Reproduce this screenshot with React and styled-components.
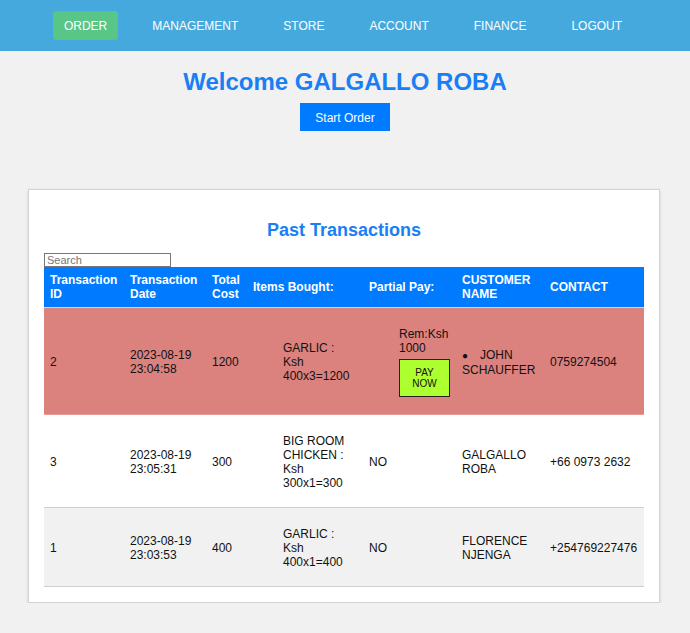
import React from 'react';
import styled, { createGlobalStyle } from 'styled-components';

const GlobalStyle = createGlobalStyle`
  body {
    margin: 0;
    background-color: #f1f1f1;
    font-family: "Liberation Sans", Arial, sans-serif;
    font-size: 12px;
    color: #111;
  }
`;

const NavBar = styled.nav`
  height: 51px;
  padding-right: 4px;
  background-color: #45a9dd;
  display: flex;
  align-items: center;
  justify-content: center;
  gap: 23px;
`;

const NavItem = styled.a`
  display: block;
  padding: 8px 11px 6px;
  line-height: 15px;
  font-size: 12px;
  color: #ffffff;
  text-decoration: none;
  border-radius: 3px;
  background-color: ${(p) => (p.$active ? '#58c687' : 'transparent')};
  cursor: pointer;
`;

const Hero = styled.section`
  display: flex;
  flex-direction: column;
  align-items: center;
  padding-top: 17px;
`;

const Title = styled.h1`
  margin: 0;
  font-size: 24px;
  line-height: 28px;
  font-weight: bold;
  color: #1a7ef5;
`;

const StartButton = styled.button`
  margin-top: 7px;
  padding: 8px 15px 6px;
  font-family: inherit;
  font-size: 12px;
  line-height: 14px;
  height: 28px;
  color: #ffffff;
  background-color: #007bff;
  border: none;
  cursor: pointer;
`;

const Card = styled.div`
  width: 600px;
  margin: 58px 0 0 28px;
  padding: 15px;
  background-color: #ffffff;
  border: 1px solid #d2d2d2;
  box-shadow: 0 1px 3px rgba(0, 0, 0, 0.12);
`;

const CardTitle = styled.h2`
  margin: 15px 0 12px;
  text-align: center;
  font-size: 18px;
  line-height: 21px;
  color: #1a7ef5;
`;

const SearchInput = styled.input`
  display: block;
  box-sizing: border-box;
  width: 127px;
  height: 14px;
  margin: 0;
  padding: 0 2px;
  font-family: inherit;
  font-size: 11px;
  border: 1px solid #767676;
  outline: none;

  &::placeholder {
    color: #757575;
  }
`;

const Table = styled.table`
  width: 600px;
  table-layout: fixed;
  border-collapse: collapse;
`;

const HeadCell = styled.th`
  padding: 6px;
  text-align: left;
  vertical-align: middle;
  font-size: 12px;
  line-height: 14px;
  font-weight: bold;
  color: #ffffff;
  background-color: #007bff;
`;

const Row = styled.tr`
  background-color: ${(p) => p.$bg};
  border-bottom: 1px solid ${(p) => p.$line};
`;

const Cell = styled.td`
  padding: 19px 6px 17px;
  vertical-align: middle;
  font-size: 12px;
  line-height: 14px;
  color: #111;
`;

const ItemList = styled.ul`
  margin: 0;
  padding-left: 30px;
  list-style: none;
`;

const PayButton = styled.button`
  display: block;
  width: 51px;
  height: 38px;
  margin-top: 4px;
  padding: 0 8px;
  font-family: inherit;
  font-size: 10px;
  line-height: 11px;
  color: #111;
  background-color: #adff2f;
  border: 1px solid #222;
  cursor: pointer;
`;

const NameList = styled.ul`
  margin: 0;
  padding: 0;
  list-style: none;
`;

const Bullet = styled.span`
  display: inline-block;
  width: 18px;
  font-size: 10px;
`;

const columns = [
  { label: 'Transaction ID', width: 80 },
  { label: 'Transaction Date', width: 82 },
  { label: 'Total Cost', width: 41 },
  { label: 'Items Bought:', width: 116 },
  { label: 'Partial Pay:', width: 93 },
  { label: 'CUSTOMER NAME', width: 88 },
  { label: 'CONTACT', width: 100 },
];

const transactions = [
  {
    id: '2',
    date: ['2023-08-19', '23:04:58'],
    total: '1200',
    items: 'GARLIC : Ksh 400x3=1200',
    remaining: 'Rem:Ksh 1000',
    customer: 'JOHN SCHAUFFER',
    contact: '0759274504',
    bg: '#db827f',
    line: '#e39c99',
  },
  {
    id: '3',
    date: ['2023-08-19', '23:05:31'],
    total: '300',
    items: 'BIG ROOM CHICKEN : Ksh 300x1=300',
    remaining: null,
    customer: 'GALGALLO ROBA',
    contact: '+66 0973 2632',
    bg: '#ffffff',
    line: '#d0d0d0',
  },
  {
    id: '1',
    date: ['2023-08-19', '23:03:53'],
    total: '400',
    items: 'GARLIC : Ksh 400x1=400',
    remaining: null,
    customer: 'FLORENCE NJENGA',
    contact: '+254769227476',
    bg: '#f1f1f1',
    line: '#d0d0d0',
  },
];

const navLinks = ['ORDER', 'MANAGEMENT', 'STORE', 'ACCOUNT', 'FINANCE', 'LOGOUT'];

const App = () => {
  return (
    <>
      <GlobalStyle />
      <NavBar>
        {navLinks.map((link) => (
          <NavItem key={link} $active={link === 'ORDER'}>{link}</NavItem>
        ))}
      </NavBar>
      <Hero>
        <Title>Welcome GALGALLO ROBA</Title>
        <StartButton>Start Order</StartButton>
      </Hero>
      <Card>
        <CardTitle>Past Transactions</CardTitle>
        <SearchInput placeholder="Search" />
        <Table>
          <colgroup>
            {columns.map((c) => (
              <col key={c.label} style={{ width: c.width }} />
            ))}
          </colgroup>
          <thead>
            <Row $bg="#007bff" $line="#cfd8e3">
              {columns.map((c) => (
                <HeadCell key={c.label}>{c.label}</HeadCell>
              ))}
            </Row>
          </thead>
          <tbody>
            {transactions.map((t) => (
              <Row key={t.id} $bg={t.bg} $line={t.line}>
                <Cell>{t.id}</Cell>
                <Cell>{t.date[0]} {t.date[1]}</Cell>
                <Cell>{t.total}</Cell>
                <Cell>
                  <ItemList>
                    <li>{t.items}</li>
                  </ItemList>
                </Cell>
                <Cell>
                  {t.remaining ? (
                    <ItemList>
                      <li>{t.remaining}</li>
                      <li><PayButton>PAY NOW</PayButton></li>
                    </ItemList>
                  ) : (
                    'NO'
                  )}
                </Cell>
                <Cell>
                  {t.remaining ? (
                    <NameList>
                      <li><Bullet>●</Bullet>{t.customer}</li>
                    </NameList>
                  ) : (
                    t.customer
                  )}
                </Cell>
                <Cell>{t.contact}</Cell>
              </Row>
            ))}
          </tbody>
        </Table>
      </Card>
    </>
  );
};

export default App;
